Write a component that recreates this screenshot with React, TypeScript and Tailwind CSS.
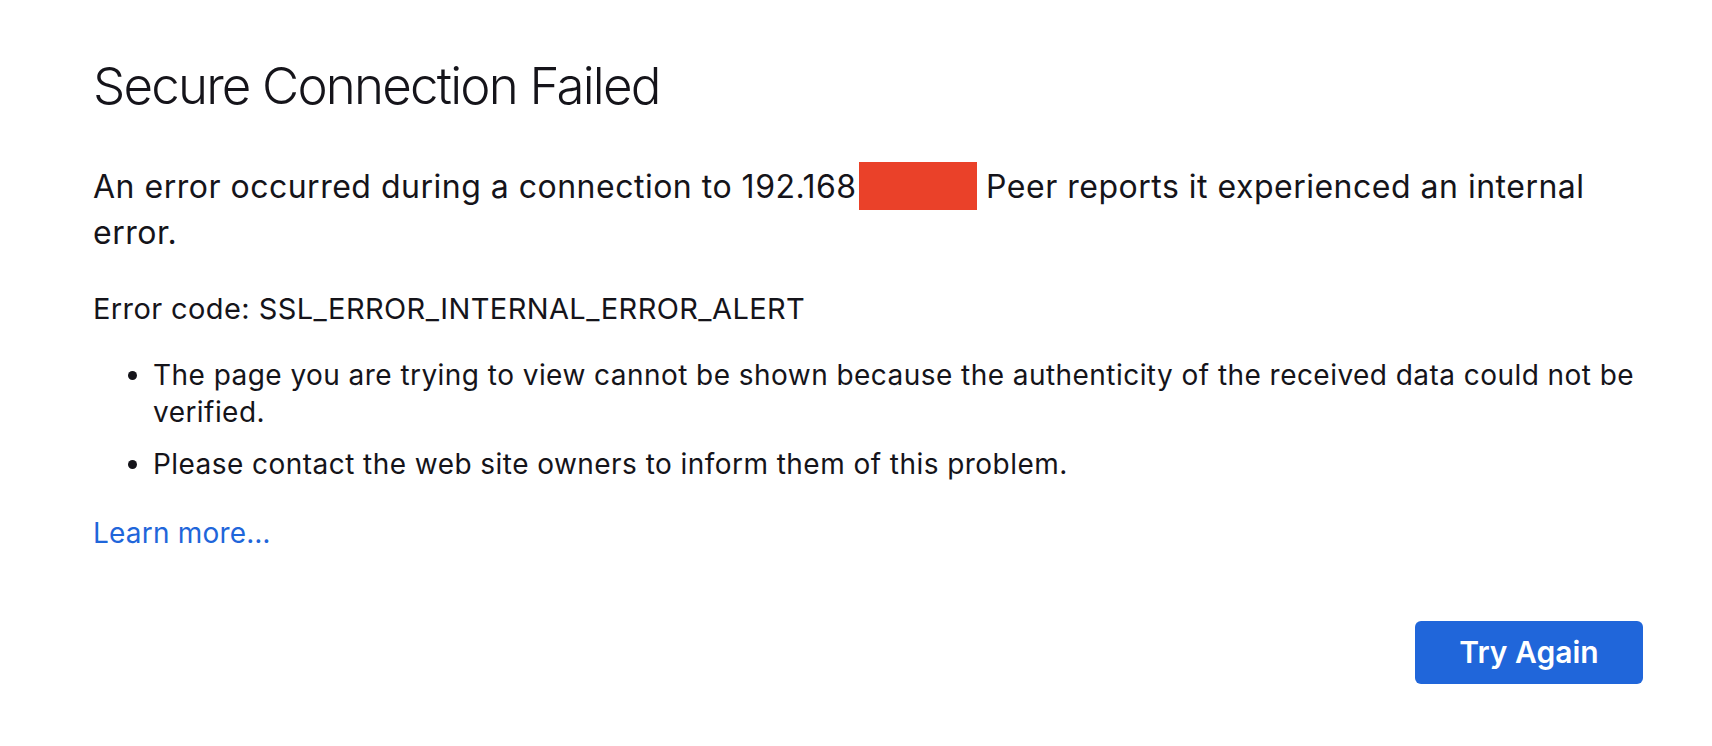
import React from "react";

export default function App() {
  return (
    <div className="w-[1712px] h-[746px] bg-white text-[#15141a] font-['Inter',sans-serif] overflow-hidden">
      <div className="ml-[93px] w-[1550px] pt-[56px]">
        <h1 className="text-[51px] leading-[60px] font-light tracking-[-1.8px]">Secure Connection Failed</h1>
        <p className="mt-[48px] text-[32px] leading-[45px] tracking-[0.5px]">
          An error occurred during a connection to 192.168
          <span className="inline-block align-top mt-[-2px] ml-[2px] w-[118px] h-[48px] bg-[#ea4129]"></span>{" "}
          Peer reports it experienced an internal error.
        </p>
        <p className="mt-[34px] text-[29px] leading-[40px] tracking-[0.4px]">Error code: SSL_ERROR_INTERNAL_ERROR_ALERT</p>
        <ul className="mt-[28px] pl-[60px] list-disc text-[28px] leading-[37px] tracking-[0.45px] flex flex-col gap-[15px]">
          <li>The page you are trying to view cannot be shown because the authenticity of the received data could not be verified.</li>
          <li>Please contact the web site owners to inform them of this problem.</li>
        </ul>
        <a href="#" className="block mt-[30px] text-[28px] leading-[40px] tracking-[0.2px] text-[#1f66da] w-fit">Learn more…</a>
        <div className="mt-[68px] flex justify-end">
          <button className="w-[228px] h-[63px] rounded-[6px] bg-[#2066da] text-white text-[30px] font-semibold">Try Again</button>
        </div>
      </div>
    </div>
  );
}
